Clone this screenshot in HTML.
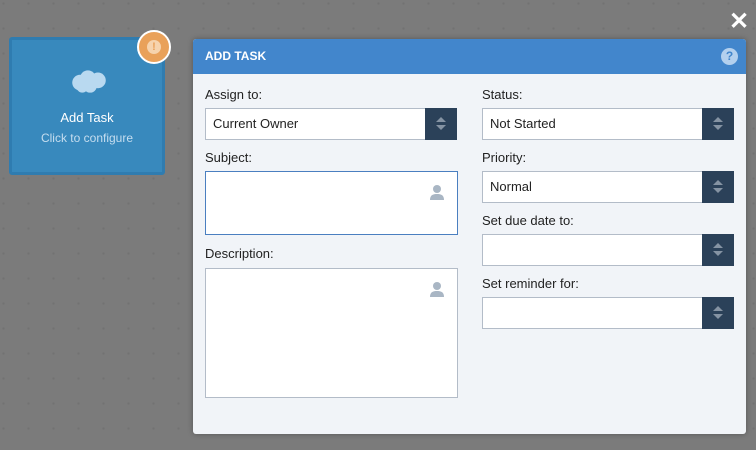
<!DOCTYPE html><html><head><style>
*{margin:0;padding:0;box-sizing:border-box}
body{width:756px;height:450px;overflow:hidden;background-color:#7b7b7b;background-image:radial-gradient(circle,#727272 1px,transparent 1.3px);background-size:25px 25px;background-position:-9px -9px;font-family:"Liberation Sans",sans-serif;position:relative}
.card{position:absolute;left:9px;top:37px;width:156px;height:138px;background:#3889bd;border:3px solid #2f7cb0;border-radius:3px;text-align:center;color:#fff}
.badge{position:absolute;left:137px;top:30px;width:34px;height:34px;border-radius:50%;background:#e9a15a;border:2px solid #fff}
.badge i{position:absolute;left:8px;top:8px;width:14px;height:14px;border-radius:50%;background:#f6d3ad;color:#e9a15a;font-style:normal;font-weight:bold;font-size:11px;line-height:14px;text-align:center}
.modal{position:absolute;left:193px;top:39px;width:553px;height:395px;background:#f1f4f8;border-radius:3px;overflow:hidden;box-shadow:0 0 6px rgba(0,0,0,.3)}
.hd{height:35px;background:#4286cc;color:#fff;font-weight:bold;font-size:12px;line-height:35px;padding-left:12px}
.help{position:absolute;right:8px;top:9px;width:17px;height:17px;border-radius:50%;background:#b3d0ee;color:#4286cc;font-size:12px;font-weight:bold;text-align:center;line-height:17px}
.lbl{position:absolute;font-size:13px;color:#222}
.sel{position:absolute;width:252px;height:32px;background:#fff;border:1px solid #b3bcc8;font-size:13px;line-height:30px;padding-left:7px;color:#222}
.sel b{position:absolute;right:-1px;top:-1px;width:32px;height:32px;background:#2b4159}
.sel b:before,.sel b:after{content:"";position:absolute;left:11px;border-left:5px solid transparent;border-right:5px solid transparent}
.sel b:before{top:9px;border-bottom:5px solid #8593a3}
.sel b:after{top:17px;border-top:5px solid #8593a3}
.ta{position:absolute;width:253px;background:#fff;border:1px solid #b3bcc8}
.u{position:absolute;right:12px;top:12px;width:16px;height:16px}
.x{position:absolute;left:729px;top:10px;color:#fff;font-size:24px;font-weight:bold;line-height:24px}
</style></head><body>
<div class="card">
<svg style="position:absolute;left:58px;top:28px" width="38" height="27" viewBox="0 0 34 24"><g fill="#b9d9f0"><circle cx="9" cy="13" r="7"/><circle cx="16" cy="9" r="7"/><circle cx="25" cy="11" r="7"/><circle cx="18" cy="16" r="6"/><circle cx="11" cy="17" r="5"/></g></svg>
<div style="position:absolute;top:70px;width:100%;font-size:13px">Add Task</div>
<div style="position:absolute;top:91px;width:100%;font-size:12px;color:#c5ddef">Click to configure</div>
</div>
<div class="badge"><i>!</i></div>
<div class="x">✕</div>
<div class="modal">
<div class="hd">ADD TASK</div><div class="help">?</div>
<div class="lbl" style="left:12px;top:48px">Assign to:</div>
<div class="sel" style="left:12px;top:69px">Current Owner<b></b></div>
<div class="lbl" style="left:12px;top:111px">Subject:</div>
<div class="ta" style="left:12px;top:132px;height:64px;border-color:#4a7fc0"><svg class="u" viewBox="0 0 16 16"><circle cx="8" cy="5" r="4" fill="#a9b6c4"/><path d="M1 16c0-5 3-6 7-6s7 1 7 6z" fill="#a9b6c4"/></svg></div>
<div class="lbl" style="left:12px;top:207px">Description:</div>
<div class="ta" style="left:12px;top:229px;height:130px"><svg class="u" viewBox="0 0 16 16"><circle cx="8" cy="5" r="4" fill="#a9b6c4"/><path d="M1 16c0-5 3-6 7-6s7 1 7 6z" fill="#a9b6c4"/></svg></div>
<div class="lbl" style="left:289px;top:48px">Status:</div>
<div class="sel" style="left:289px;top:69px">Not Started<b></b></div>
<div class="lbl" style="left:289px;top:111px">Priority:</div>
<div class="sel" style="left:289px;top:132px">Normal<b></b></div>
<div class="lbl" style="left:289px;top:174px">Set due date to:</div>
<div class="sel" style="left:289px;top:195px"><b></b></div>
<div class="lbl" style="left:289px;top:237px">Set reminder for:</div>
<div class="sel" style="left:289px;top:258px"><b></b></div>
</div>
</body></html>
